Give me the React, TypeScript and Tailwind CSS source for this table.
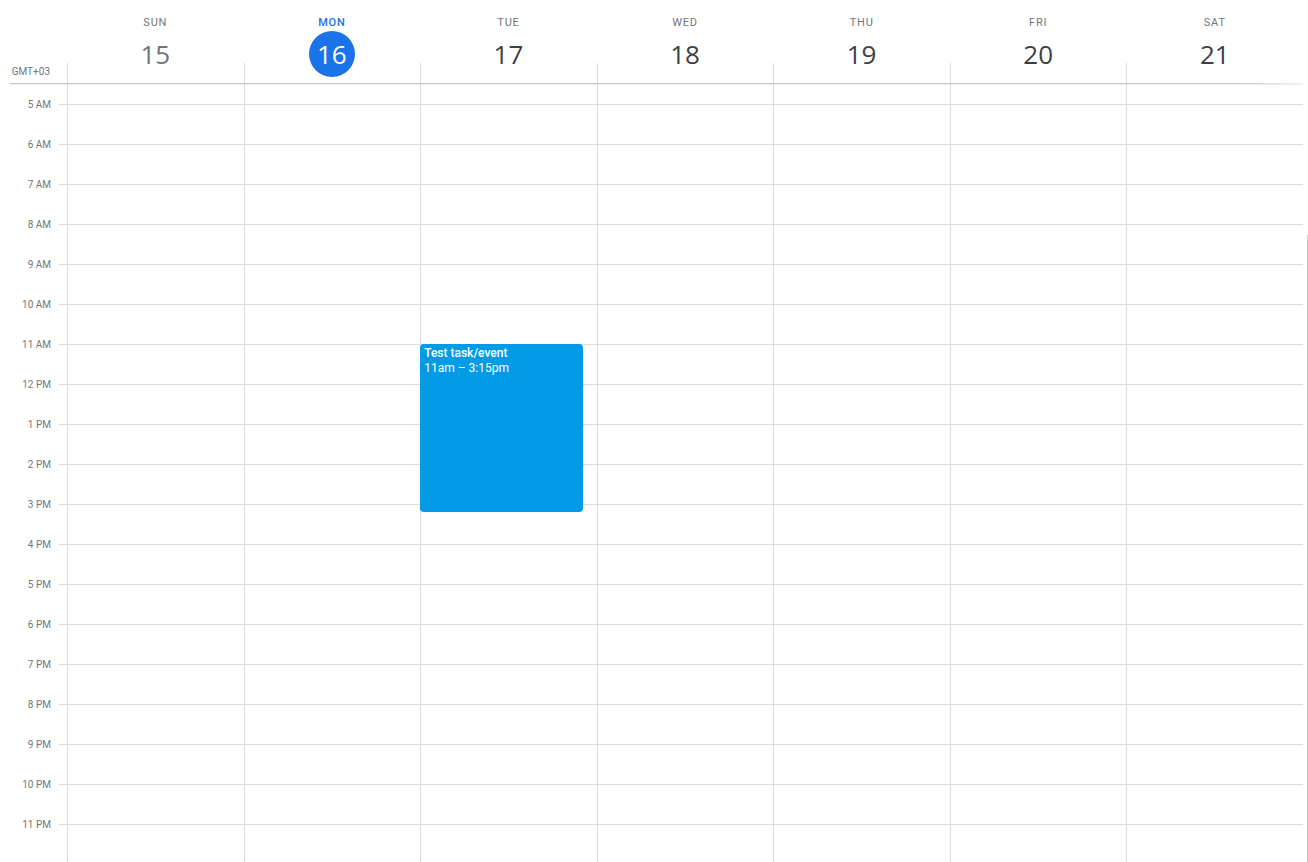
const days = [
  { name: 'SUN', num: 15, past: true },
  { name: 'MON', num: 16, today: true },
  { name: 'TUE', num: 17 },
  { name: 'WED', num: 18 },
  { name: 'THU', num: 19 },
  { name: 'FRI', num: 20 },
  { name: 'SAT', num: 21 },
];

const hours = [
  '5 AM', '6 AM', '7 AM', '8 AM', '9 AM', '10 AM', '11 AM', '12 PM', '1 PM', '2 PM',
  '3 PM', '4 PM', '5 PM', '6 PM', '7 PM', '8 PM', '9 PM', '10 PM', '11 PM',
];

function DayHeader({ day }: { day: (typeof days)[number] }) {
  return (
    <div className="relative flex flex-1 flex-col items-center pt-[16px]">
      <span
        className={`text-[11px] leading-[14px] tracking-[0.8px] ${
          day.today ? 'font-medium text-[#1a73e8]' : 'text-[#70757a]'
        }`}
      >
        {day.name}
      </span>
      <div
        className={`mt-px flex h-[46px] w-[46px] items-center justify-center rounded-full font-['Open_Sans',sans-serif] text-[26px] leading-none ${
          day.today ? 'bg-[#1a73e8] text-white' : day.past ? 'text-[#70757a]' : 'text-[#3c4043]'
        }`}
      >
        {day.num}
      </div>
      {/* short divider under the header */}
      <span className="absolute bottom-0 left-0 h-5 w-px bg-[#dadce0]" />
    </div>
  );
}

export default function App() {
  return (
    <div className="flex h-[862px] flex-col overflow-hidden bg-white font-['Roboto',sans-serif]">
      {/* Week header */}
      <div className="flex h-[83px] shrink-0">
        <div className="flex w-[67px] flex-col items-end justify-end pb-[5px] pr-[17px]">
          <span className="text-[10px] leading-3 text-[#70757a]">GMT+03</span>
        </div>
        <div className="flex flex-1">
          {days.map((d) => (
            <DayHeader key={d.name} day={d} />
          ))}
        </div>
        <div className="w-[5px]" />
      </div>
      <div className="ml-[10px] mr-[5px] h-px shrink-0 bg-gradient-to-r from-[#c4c7c5] via-[#c4c7c5] via-95% to-[#f1f3f4] shadow-[0_1px_1px_rgba(0,0,0,0.08)]" />

      {/* Time grid */}
      <div className="flex min-h-0 flex-1">
        <div className="flex w-[67px] shrink-0 flex-col">
          <div className="h-5 shrink-0" />
          {hours.map((h) => (
            <div key={h} className="flex h-10 shrink-0 items-start">
              <span className="-mt-[5px] w-[59px] pr-2 text-right text-[10px] leading-3 text-[#70757a]">{h}</span>
              <span className="w-2 border-t border-[#dadce0]" />
            </div>
          ))}
        </div>

        <div className="grid flex-1 grid-cols-7">
          {days.map((d) => (
            <div key={d.name} className="relative flex flex-col border-l border-[#dadce0]">
              <div className="h-5 shrink-0" />
              {hours.map((h) => (
                <div key={h} className="h-10 shrink-0 border-t border-[#dadce0]" />
              ))}
              {d.name === 'TUE' && (
                <div className="absolute left-[-1px] right-[14px] top-[260px] h-[168px] rounded-[4px] bg-[#039be5] px-1 pt-[2px] text-[12px] leading-[15px] text-white">
                  <div className="font-medium">Test task/event</div>
                  <div>11am – 3:15pm</div>
                </div>
              )}
            </div>
          ))}
        </div>

        <div className="flex w-[5px] shrink-0 flex-col">
          <div className="h-[151px] shrink-0" />
          <div className="flex-1 border-r border-[#c8c8c8]" />
        </div>
      </div>
    </div>
  );
}
